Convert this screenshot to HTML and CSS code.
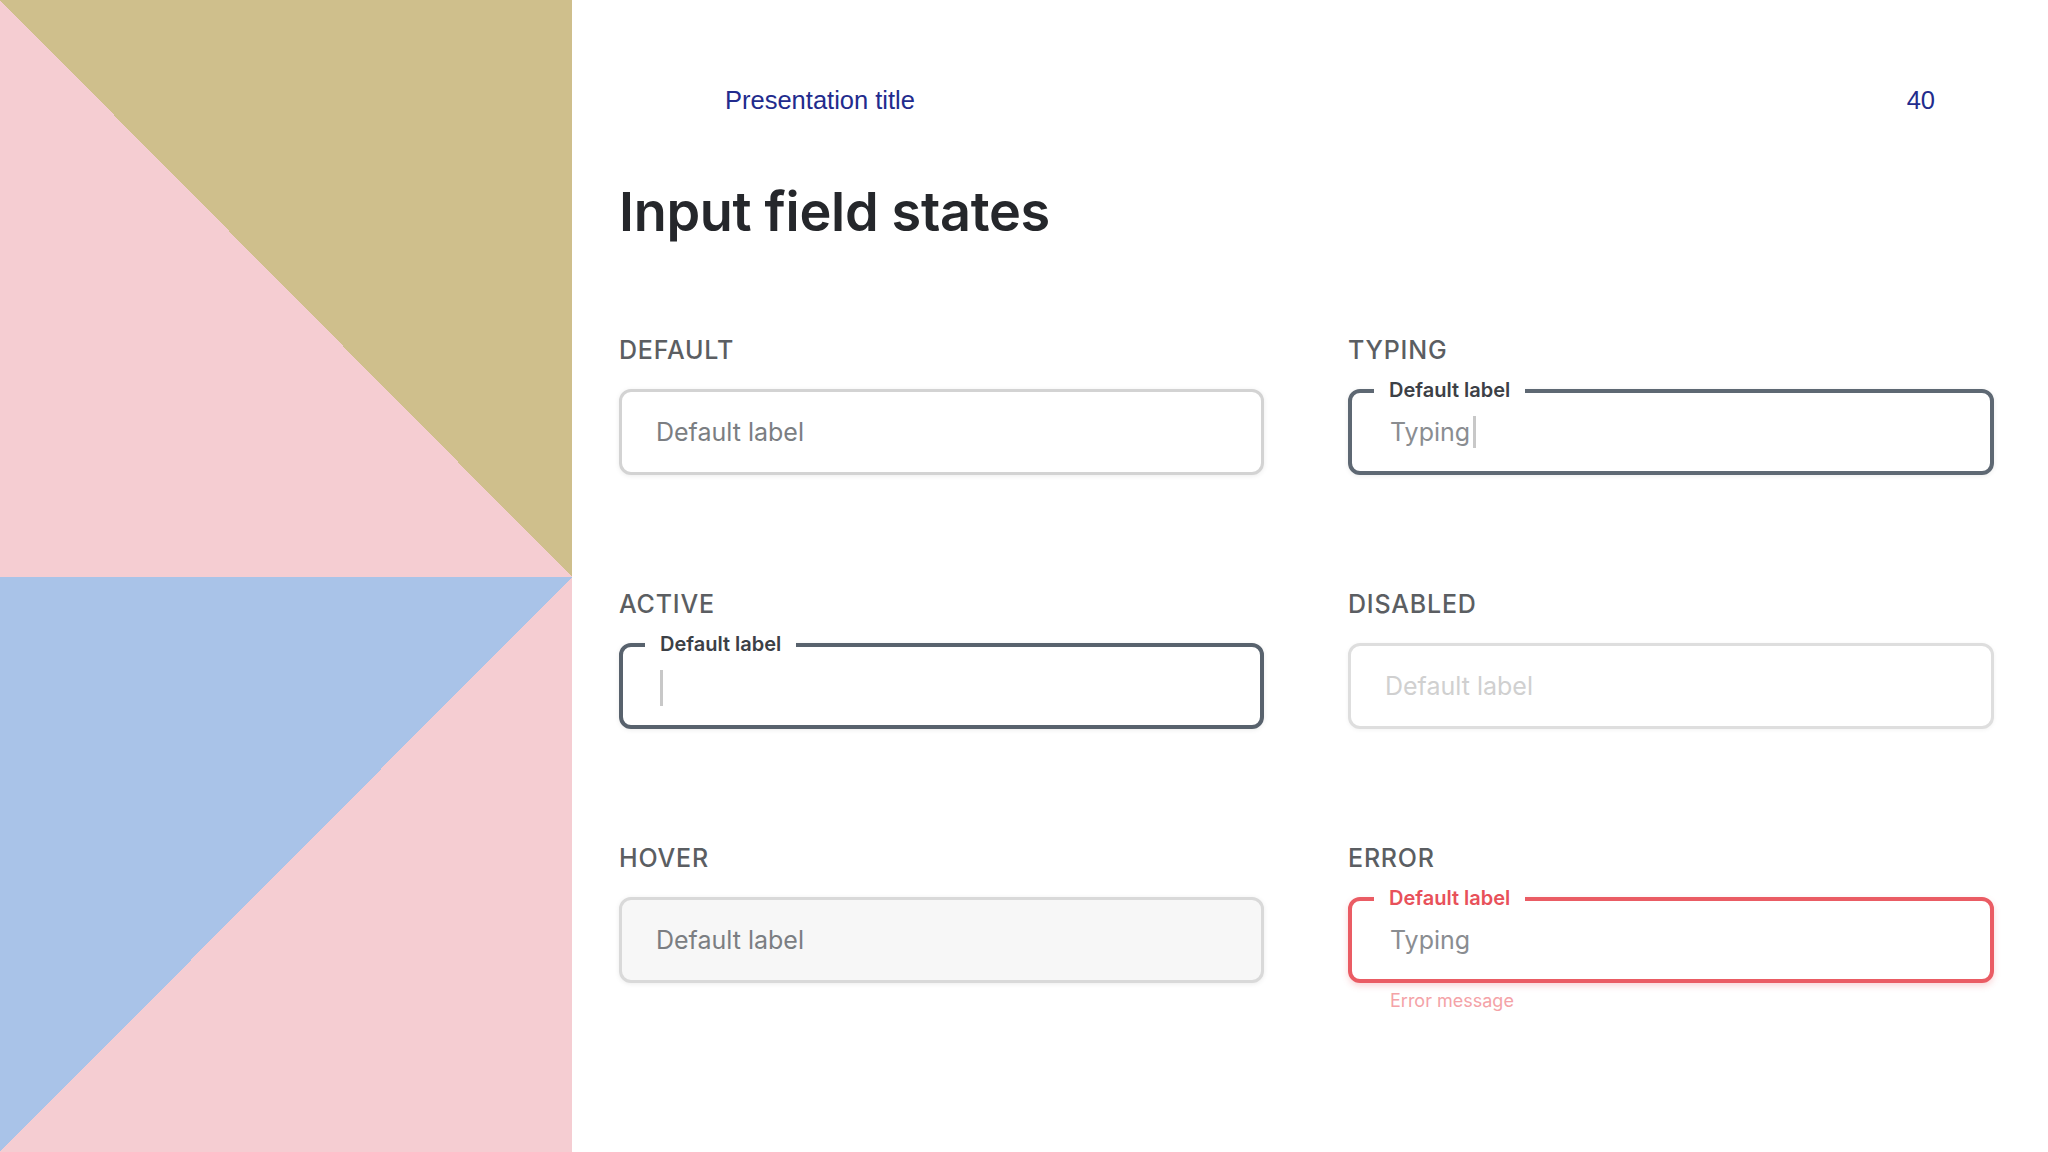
FILE: index.html
```html
<!DOCTYPE html>
<html lang="en">
<head>
<meta charset="utf-8">
<title>Input field states</title>
<link rel="stylesheet" href="styles.css">
</head>
<body>
<div class="slide">
  <aside class="art">
    <div class="tri tri-top"></div>
    <div class="tri tri-bottom"></div>
  </aside>
  <main class="content">
    <header class="header">
      <span class="pres">Presentation title</span>
      <span class="num">40</span>
    </header>
    <h1 class="title">Input field states</h1>
    <section class="grid">
      <div class="field">
        <div class="state">DEFAULT</div>
        <div class="box box-default"><span class="ph">Default label</span></div>
      </div>
      <div class="field">
        <div class="state">TYPING</div>
        <div class="box box-typing">
          <span class="float">Default label</span>
          <span class="val">Typing</span><span class="caret caret-inline"></span>
        </div>
      </div>
      <div class="field">
        <div class="state">ACTIVE</div>
        <div class="box box-active">
          <span class="float">Default label</span>
          <span class="caret caret-active"></span>
        </div>
      </div>
      <div class="field">
        <div class="state">DISABLED</div>
        <div class="box box-disabled"><span class="ph ph-disabled">Default label</span></div>
      </div>
      <div class="field">
        <div class="state">HOVER</div>
        <div class="box box-hover"><span class="ph">Default label</span></div>
      </div>
      <div class="field">
        <div class="state">ERROR</div>
        <div class="box box-error">
          <span class="float float-error">Default label</span>
          <span class="val">Typing</span>
        </div>
        <div class="err">Error message</div>
      </div>
    </section>
  </main>
</div>
</body>
</html>
```

FILE: styles.css
```css
* { box-sizing: border-box; }
html, body { margin: 0; padding: 0; }
body {
  width: 2048px;
  height: 1152px;
  overflow: hidden;
  background: #ffffff;
  font-family: "Inter", "Liberation Sans", sans-serif;
}
.slide {
  display: flex;
  width: 2048px;
  height: 1152px;
}
.art {
  width: 572px;
  flex: 0 0 572px;
  display: flex;
  flex-direction: column;
}
.tri { width: 100%; }
.tri-top {
  height: 577px;
  background: linear-gradient(to top right, #f5cdd2 50%, #cfbf8c 50%);
}
.tri-bottom {
  flex: 1;
  background: linear-gradient(to bottom right, #a9c3e8 50%, #f5cdd2 50%);
}
.content {
  flex: 1;
  padding: 85px 54px 0 47px;
}
.header {
  display: flex;
  justify-content: space-between;
  padding: 0 59px 0 106px;
  font-family: "Liberation Sans", Arial, sans-serif;
  font-size: 25.5px;
  line-height: 30px;
  color: #222b8d;
}
.title {
  margin: 65px 0 0 0;
  font-family: "Inter", sans-serif;
  font-weight: 600;
  font-size: 54px;
  line-height: 64px;
  letter-spacing: -0.3px;
  color: #25272b;
}
.grid {
  margin-top: 91px;
  display: grid;
  grid-template-columns: 645px 646px;
  column-gap: 84px;
  row-gap: 114px;
  align-items: start;
}
.state {
  font-size: 25px;
  line-height: 30px;
  font-weight: 500;
  letter-spacing: 0.8px;
  color: #5b5e62;
  margin-bottom: 24px;
}
.box {
  position: relative;
  height: 86px;
  border: 3px solid #d3d3d3;
  border-radius: 12px;
  background: #ffffff;
  display: flex;
  align-items: center;
  padding-left: 34px;
  box-shadow: 0 1px 5px rgba(0, 0, 0, 0.08);
}
.ph {
  font-size: 25px;
  color: #7b7e82;
}
.ph-disabled { color: #d0d0d0; }
.val {
  font-size: 25px;
  color: #8a8d91;
}
.box-typing {
  border: 4px solid #5e6873;
  padding-left: 38px;
}
.box-active {
  border: 4px solid #58626d;
  padding-left: 37px;
}
.box-disabled {
  border-color: #dedede;
  box-shadow: 0 1px 4px rgba(0, 0, 0, 0.05);
}
.box-hover {
  background: #f7f7f7;
  border-color: #d9d9d9;
}
.box-error {
  border: 4px solid #ea5c64;
  padding-left: 38px;
  box-shadow: 0 3px 6px rgba(234, 92, 100, 0.25);
}
.float {
  position: absolute;
  top: -14px;
  left: 22px;
  padding: 0 15px;
  background: #ffffff;
  font-size: 20px;
  line-height: 22px;
  font-weight: 600;
  color: #3c4046;
}
.float-error { color: #e8515a; }
.caret {
  display: inline-block;
  width: 3px;
  background: #c8c8c8;
}
.caret-inline {
  height: 32px;
  margin-left: 3px;
}
.caret-active {
  height: 36px;
  margin-top: 4px;
}
.err {
  margin-top: 6px;
  padding-left: 42px;
  font-size: 18px;
  line-height: 24px;
  color: #f4a2a7;
}
```
